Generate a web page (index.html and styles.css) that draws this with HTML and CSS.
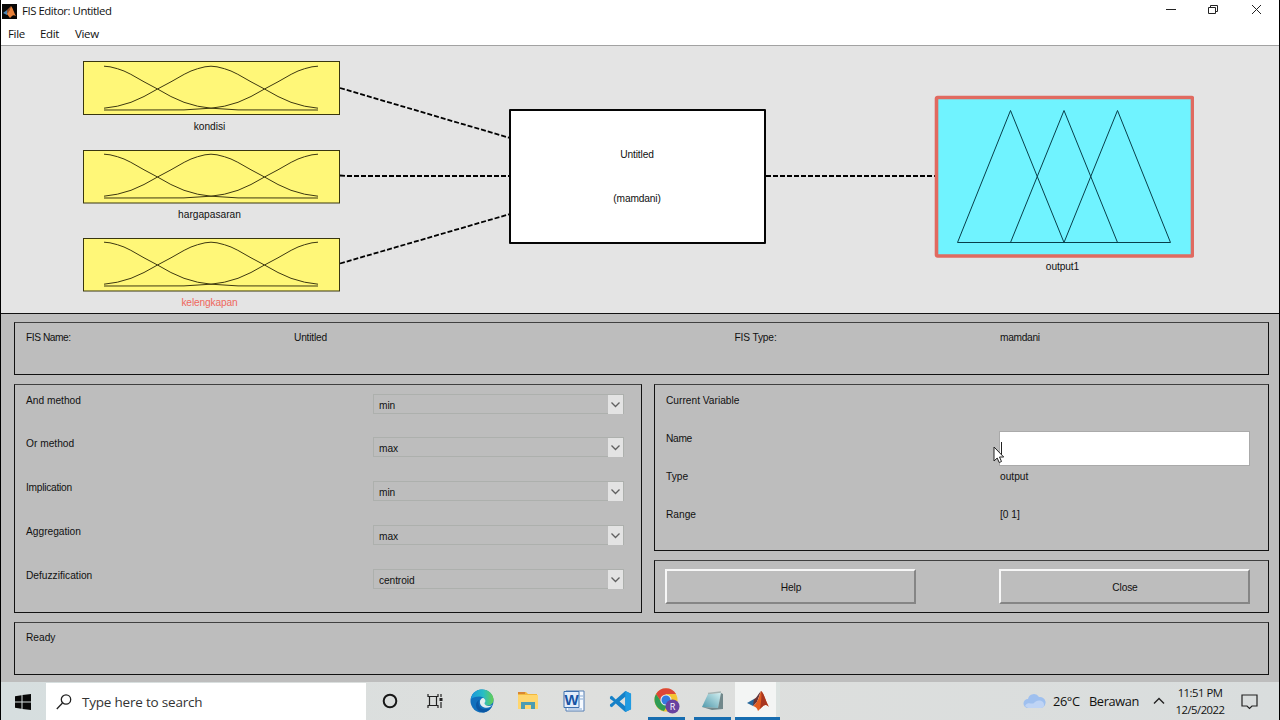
FILE: index.html
```html
<!DOCTYPE html>
<html lang="en">
<head>
<meta charset="utf-8">
<title>FIS Editor: Untitled</title>
<link rel="stylesheet" href="styles.css">
</head>
<body>
<div class="screen">
  <header class="titlebar">
    <svg class="app-icon" width="15" height="15" viewBox="0 0 15 15"><rect width="15" height="15" fill="#080706"/><path d="M1 9l4-3 2 1-2 4z" fill="#4a86b4"/><path d="M5 6l4-4-2 6-2 3z" fill="#93502d"/><path d="M9 2c2 2 3 7 5 10-2-1-3-1-4 0l-2 2-3-4c2-2 3-5 4-8z" fill="#e8813a"/></svg>
    <span class="title">FIS Editor: Untitled</span>
    <svg class="window-controls" width="112" height="22" viewBox="0 0 112 22" fill="none" stroke="#222" stroke-width="1"><path d="M6 9.500h10"/><path d="M48.500 7.500h7v6h-7zM50.500 7.500v-2h7v6h-2"/><path d="M92 5l9 9M101 5l-9 9"/></svg>
  </header>
  <nav class="menubar"><span class="m-file">File</span><span class="m-edit">Edit</span><span class="m-view">View</span></nav>

  <main class="diagram">
    <svg class="wires" width="1278" height="267" viewBox="1 46 1278 267" fill="none" stroke="#000" stroke-width="1.8" stroke-dasharray="5 2"><path d="M340 88L510 138"/><path d="M340 175.500L347 176H510"/><path d="M340 263.500L510 214"/><path d="M766 176H935"/></svg>
    <svg width="0" height="0" class="defs"><defs><g id="mf" fill="none" stroke="#3d3810" stroke-width="1"><path d="M21 5.200L27 5.800 34.400 7.700 41 10 47.800 13.300 61 20.800 74.500 28 87.900 35.500 101 41.300 114.600 45.200 128 47.200 155 48.900 235 49"/><path d="M235 5.200L229 5.800 221.600 7.700 215 10 208.200 13.300 195 20.800 181.500 28 168 35.500 155 41.300 141.400 45.200 128 47.200 101 48.900 21 49"/><path d="M21 47.200L34.400 45.200 48 41.300 61 35.500 74.500 28 88 20.800 101.200 13.300 108 10 114.600 7.700 122 5.800 128 5.200 134 5.800 141.400 7.700 148 10 154.800 13.300 168 20.800 181.500 28 195 35.500 208 41.300 221.600 45.200 235 47.200"/></g></defs></svg>
    <div class="node input kondisi"><svg width="257" height="54"><rect x=".5" y=".5" width="256" height="53"/><use href="#mf"/></svg><span>kondisi</span></div>
    <div class="node input harga"><svg width="257" height="54"><rect x=".5" y=".5" width="256" height="52.500"/><use href="#mf" y="-1"/></svg><span>hargapasaran</span></div>
    <div class="node input kelengkapan"><svg width="257" height="54"><rect x=".5" y=".5" width="256" height="52.500"/><use href="#mf" y="-1"/></svg><span>kelengkapan</span></div>
    <div class="node system"><span>Untitled</span><span>(mamdani)</span></div>
    <div class="node output"><svg width="260" height="163" fill="none"><rect x="2.500" y="2.500" width="256" height="158.500" rx="1" fill="#70f3ff" stroke="#e06a60" stroke-width="3.600"/><g stroke="#083f4b" stroke-width="1"><path d="M23.500 147.500L76.500 15.500 130 147.500 183.500 15.500 236.500 147.500z"/><path d="M76.500 147.500L130 15.500 183.500 147.500"/></g></svg><span>output1</span></div>
  </main>

  <section class="settings">
    <div class="panel info"><span class="c1">FIS Name:</span><span class="c2">Untitled</span><span class="c3">FIS Type:</span><span class="c4">mamdani</span></div>
    <div class="columns">
      <div class="panel methods">
        <div class="method"><label>And method</label><div class="select"><span>min</span><i><svg width="9" height="6"><path d="M.500.500l4 4 4-4"/></svg></i></div></div>
        <div class="method"><label>Or method</label><div class="select"><span>max</span><i><svg width="9" height="6"><path d="M.500.500l4 4 4-4"/></svg></i></div></div>
        <div class="method"><label>Implication</label><div class="select"><span>min</span><i><svg width="9" height="6"><path d="M.500.500l4 4 4-4"/></svg></i></div></div>
        <div class="method"><label>Aggregation</label><div class="select"><span>max</span><i><svg width="9" height="6"><path d="M.500.500l4 4 4-4"/></svg></i></div></div>
        <div class="method"><label>Defuzzification</label><div class="select"><span>centroid</span><i><svg width="9" height="6"><path d="M.500.500l4 4 4-4"/></svg></i></div></div>
      </div>
      <div class="right-column">
        <div class="panel variable">
          <div class="labels"><span>Current Variable</span><span>Name</span><span>Type</span><span>Range</span></div>
          <div class="values"><div class="name-input"><b class="caret"></b></div><span class="type-value">output</span><span>[0 1]</span></div>
          <svg class="cursor" width="12" height="18" viewBox="0 0 12 18"><path d="M1 1v14l3.200-3 2 4.500 2.300-1-2-4.500h4.200z" fill="#fff" stroke="#222" stroke-width="1"/></svg>
        </div>
        <div class="panel actions"><button>Help</button><button>Close</button></div>
      </div>
    </div>
    <div class="panel status">Ready</div>
  </section>

  <footer class="taskbar">
    <div class="start"><svg width="16" height="16"><path d="M0 2.300l6.500-1v6.200H0zM7.500 1.100L16 0v7.500H7.500zM0 8.500h6.500v6.200L0 13.700zM7.500 8.500H16V16l-8.500-1.100z" fill="#080808"/></svg></div>
    <div class="search"><svg width="16" height="16" fill="none" stroke="#222" stroke-width="1.300"><circle cx="10" cy="5.500" r="4.700"/><path d="M6.500 9L.8 15"/></svg><span>Type here to search</span></div>
    <div class="apps">
      <div class="app"><svg width="16" height="16"><circle cx="8" cy="8" r="6.300" fill="none" stroke="#181818" stroke-width="2"/></svg></div>
      <div class="app task-view"><svg width="17" height="16" fill="none" stroke="#222" stroke-width="1.200"><path d="M1 1v2.500h10V1M2.500 4v8M9.500 4v8M1 15v-2.500h10V15M14 1v3M14 9v6"/><path d="M12.500 5h3v3h-3z" fill="#222" stroke="none"/></svg></div>
      <div class="app"><svg width="24" height="24" viewBox="0 0 24 24"><defs><linearGradient id="eg" x1="0" x2="1"><stop stop-color="#1996dc"/><stop offset=".55" stop-color="#28bdc4"/><stop offset="1" stop-color="#65ce51"/></linearGradient></defs><circle cx="12" cy="12" r="11.500" fill="#1170bd"/><path d="M1 10C2 3 7 .500 12 .500c7 0 11.500 5 11.500 10 0 4-3 6-6 6-2 0-4-1-3-2 2-3 0-7-5-7-4 0-7 1-8.500 2.500z" fill="url(#eg)"/><path d="M9 11c-2 6 2 10 8 9 2 0 4-1 5-3-3 6-9 8-13 5-4-3-4-9 0-11z" fill="#0b57a4"/><path d="M14.500 14c2-2 .5-4-1-5-2 0-4 2-3.500 5 .5 4 6 6 10 4l2.500-2c-3 2-8 1-8-2z" fill="#e4eeee"/></svg></div>
      <div class="app"><svg width="22" height="20" viewBox="0 0 22 20"><path d="M1 1h8l2 2h9v15H1z" fill="#f3b83c"/><path d="M1 4h20v14H1z" fill="#ffd66e"/><path d="M1 1h7v2H1z" fill="#d98631"/><path d="M4 18v-7h14v7h-4v-4H8v4z" fill="#4b9cb2"/></svg></div>
      <div class="app"><svg width="22" height="22" viewBox="0 0 22 22"><path d="M3 1h18v20H3z" fill="#f6faff" stroke="#557fb4"/><path d="M1 1.500h15v16H1z" fill="#e2edfa" stroke="#3d70ae"/><path d="M17 6h3M17 9h3M5 19h14" stroke="#86a9d2"/><text x="1.500" y="14.500" font-family="Liberation Sans,sans-serif" font-size="15" font-weight="bold" fill="#1754a4">W</text></svg></div>
      <div class="app"><svg width="23" height="23" viewBox="0 0 24 24"><path d="M17 1l6 3v16l-6 3L7 14l-4 4-2-1V15l4-3-4-3V7l2-1 4 4zM17 7l-6 5 6 5z" fill="#1681c8" fill-rule="evenodd"/><path d="M17 1l6 3v16l-6 3z" fill="#209be2"/></svg></div>
      <div class="app running"><svg width="26" height="26" viewBox="0 0 26 26"><circle cx="12" cy="12" r="11.500" fill="#f5c431"/><path d="M2 6a11.500 11.500 0 0 1 20 0H12l-4 9z" fill="#dd4638"/><path d="M2 6a11.500 11.500 0 0 0 8 17l4-7-6-1z" fill="#2f9c55"/><circle cx="12" cy="12" r="5.600" fill="#e8eef7"/><circle cx="12" cy="12" r="4.500" fill="#347be0"/><circle cx="18.500" cy="18.500" r="7" fill="#6842a0"/><text x="15.700" y="22" font-family="Open Sans,sans-serif" font-size="9" fill="#fff">R</text></svg></div>
      <div class="app running"><svg width="23" height="23" viewBox="0 0 23 23"><defs><linearGradient id="ng" x1="0" y1="1" x2="1" y2="0"><stop stop-color="#4f98aa"/><stop offset="1" stop-color="#d1eff1"/></linearGradient></defs><path d="M7 4l13-1-3 15-16-1z" fill="url(#ng)"/><path d="M20 3l2 1v15l-5-1zM1 17l16 1 5 1-11 1z" fill="#71888b"/><path d="M7 3.500l13-1.500" stroke="#a6b4b3" stroke-width="1.500"/></svg></div>
      <div class="app running active"><svg width="24" height="22" viewBox="0 0 24 22"><path d="M1 13l7-4 3 2-4 5z" fill="#28699c"/><path d="M8 9c3-1 4-5 7-8l-4 11-4 4z" fill="#663437"/><path d="M15 1c3 2 5 11 8 16-3-3-5-2-7 0l-4 4c-1-3-2-4-5-5 5-3 6-10 8-15z" fill="#e15c20"/><path d="M15 1c1 5 0 11-1 18l2-2c2-2 4-3 7 0-3-5-5-14-8-16z" fill="#a73620"/></svg></div>
    </div>
    <div class="tray">
      <svg class="cloud" width="23" height="16" viewBox="0 0 23 16"><path d="M5 15a4.500 4.500 0 0 1 0-9 6 6 0 0 1 11-2 5.500 5.500 0 0 1 2 11z" fill="#9fc0ef"/><path d="M2 13c3-5 7-1 9-3s5-4 9-1c2 3 1 6-2 6H5z" fill="#bfd4f5"/></svg>
      <span class="temp">26°C</span><span class="weather">Berawan</span>
      <svg class="chevron" width="12" height="8"><path d="M1 6.500l5-5 5 5" fill="none" stroke="#222" stroke-width="1.400"/></svg>
      <div class="clock"><span>11:51 PM</span><span>12/5/2022</span></div>
      <svg class="notice" width="17" height="16"><path d="M1 1h15v11h-5l-2.500 2.500L6 12H1z" fill="none" stroke="#222" stroke-width="1.200"/></svg>
    </div>
  </footer>
</div>
</body>
</html>
```
FILE: styles.css
```css
* { box-sizing: border-box; }
body { margin: 0; width: 1280px; height: 720px; overflow: hidden; font-family: "Liberation Sans", Arial, sans-serif; font-size: 10.2px; color: #111; }
svg { display: block; flex-shrink: 0; }
.screen { width: 1280px; height: 720px; border-left: 1px solid #000; border-right: 1px solid #000; display: flex; flex-direction: column; background: #bdbdbd; }
.titlebar { height: 22px; background: #fff; display: flex; align-items: center; font: 11.4px/20px "Open Sans", sans-serif; }
.app-icon { margin: 0 5px 0 1px; }
.title { letter-spacing: -0.45px; white-space: nowrap; }
.window-controls { margin: 0 7px 0 auto; }
.menubar { height: 24px; background: #fff; border-bottom: 1px solid #a2a2a2; display: flex; padding: 0 0 1px 7px; font: 11.5px/23px "Open Sans", sans-serif; letter-spacing: -0.35px; }
.m-file { width: 32px; }
.m-edit { width: 35px; }

.diagram { position: relative; height: 267px; background: #e4e4e4; }
.wires, .defs { position: absolute; left: 0; top: 0; }
.node { position: absolute; }
.input { left: 82px; width: 257px; text-align: center; }
.input rect { fill: #fff778; stroke: #39360f; }
.input span { display: block; margin: 6px 4px 0 0; line-height: 12px; }
.kondisi { top: 15px; }
.harga { top: 104px; }
.kelengkapan { top: 192px; }
.harga span, .kelengkapan span { margin-top: 5px; }
.kelengkapan span { color: #ef685f; letter-spacing: -0.15px; }
.system { left: 508px; top: 63px; width: 257px; height: 135px; background: #fff; border: 2px solid #050505; border-radius: 1px; display: flex; flex-direction: column; align-items: center; padding: 37px 1px 0 0; line-height: 14px; gap: 30px; letter-spacing: -0.15px; }
.output { left: 933px; top: 49px; width: 260px; text-align: center; }
.output span { display: block; margin: 3px 3px 0 0; line-height: 12px; letter-spacing: -0.1px; }

.settings { height: 369px; border-top: 1px solid #111; padding: 8px 10px 0 13px; display: flex; flex-direction: column; gap: 9px; }
.panel { border: 1px solid #111; border-top-color: #404040; background: #bdbdbd; }
.info { height: 53px; padding: 8px 11px; display: flex; line-height: 14px; }
.c1 { width: 268px; letter-spacing: -0.45px; }
.c2 { width: 440.500px; letter-spacing: -0.2px; }
.c3 { width: 265.500px; letter-spacing: -0.15px; }
.c4 { letter-spacing: -0.3px; }
.columns { height: 229px; display: flex; gap: 12px; }
.methods { width: 628px; padding: 9px 17px 0 11px; }
.method { height: 44px; display: flex; justify-content: space-between; }
.method:first-child { height: 43px; }
.method label { line-height: 13px; }
.method:nth-child(3) label { letter-spacing: -0.25px; }
.select { width: 251px; height: 20px; border: 1px solid #adb0ad; display: flex; justify-content: space-between; padding-left: 5px; line-height: 21px; letter-spacing: -0.1px; }
.select i { width: 15px; height: 19px; background: #e3e3e3; display: flex; align-items: center; justify-content: center; }
.select path { fill: none; stroke: #606060; stroke-width: 1.300; }
.right-column { width: 615px; display: flex; flex-direction: column; gap: 9px; }
.variable { position: relative; height: 167px; padding: 0 18px 0 11px; display: flex; justify-content: space-between; }
.labels { display: flex; flex-direction: column; line-height: 38px; margin-top: -3px; }
.labels span:nth-child(2) { letter-spacing: -0.3px; }
.values { width: 251px; padding-top: 46px; display: flex; flex-direction: column; line-height: 38px; }
.values span { padding-left: 1px; }
.name-input { width: 251px; height: 35px; background: #fff; border: 1px solid #aaa; padding: 10px 0 0 1px; }
.caret { display: block; width: 1px; height: 14px; background: #222; }
.type-value { margin-top: -8px; }
.cursor { position: absolute; left: 338px; top: 61px; }
.actions { height: 53px; padding: 8px 18px 0 10px; display: flex; justify-content: space-between; }
.actions button { width: 251px; height: 35px; background: #bdbdbd; border: 2px solid; border-color: #f7f7f7 #858585 #858585 #f7f7f7; font: inherit; letter-spacing: -0.15px; color: #111; padding: 2px 0 0 1px; border-radius: 0; }
.status { height: 53px; padding: 8px 11px; line-height: 14px; }

.taskbar { height: 38px; background: linear-gradient(90deg, #d6dedf, #dedfdd 45%, #d9dddd); display: flex; font-family: "Open Sans", sans-serif; }
.start { width: 45px; padding: 12px 0 0 14px; }
.search { width: 320px; height: 37px; margin-top: 1px; background: #fff; display: flex; padding-left: 10px; align-items: center; gap: 10px; font-size: 13.500px; letter-spacing: -0.2px; color: #333; }
.apps { display: flex; padding-left: 1px; }
.app { width: 46px; height: 38px; display: flex; align-items: center; justify-content: center; }
.app.task-view { padding-right: 2px; }
.running { background: linear-gradient(#176db0, #176db0) 50% 100% / 37px 3px no-repeat; padding-left: 1px; }
.active { width: 45px; background: linear-gradient(#176db0, #176db0) 0 100% / 100% 3px no-repeat, linear-gradient(90deg, #f3f5f4 41px, #dce3e1 41px); }
.tray { margin-left: auto; display: flex; align-items: center; font-size: 12.800px; letter-spacing: -0.4px; white-space: nowrap; }
.cloud { margin-left: 4px; }
.temp { width: 36px; margin-left: 7px; }
.weather { width: 64px; }
.clock { width: 60px; margin-left: 5px; display: flex; flex-direction: column; align-items: center; line-height: 17px; font-size: 11.300px; letter-spacing: -0.5px; }
.notice { margin: 1px 21px 0 11px; }
```
